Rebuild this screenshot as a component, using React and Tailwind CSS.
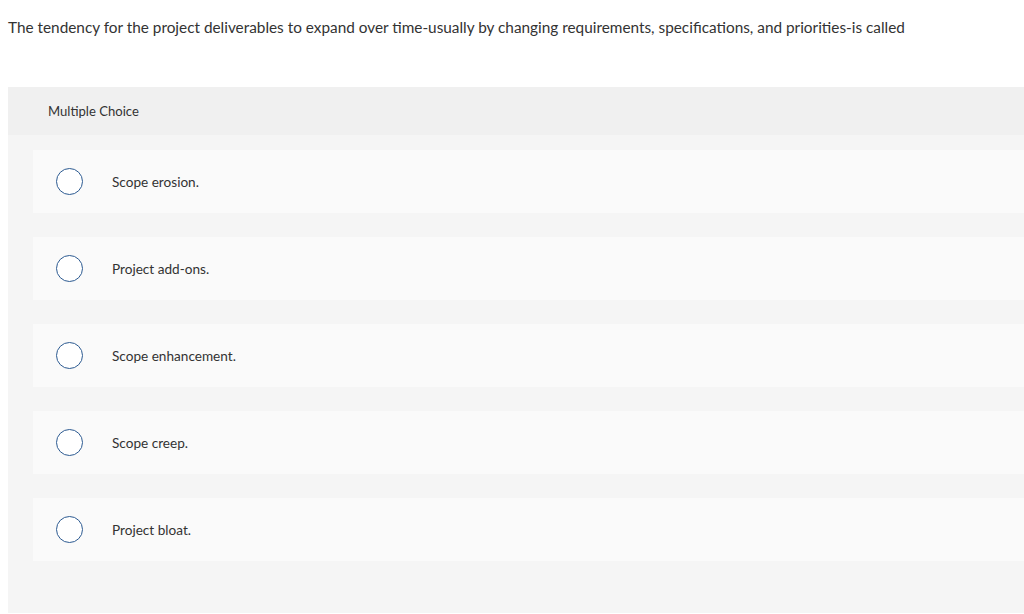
const options = [
  "Scope erosion.",
  "Project add-ons.",
  "Scope enhancement.",
  "Scope creep.",
  "Project bloat.",
];

export default function App() {
  return (
    <div className="min-h-[614px] bg-white text-[#333] font-['Lato','Open_Sans',sans-serif]">
      <p className="pl-[8px] pt-[17px] text-[15.35px] leading-[20px] h-[87px]">
        The tendency for the project deliverables to expand over time-usually by changing requirements, specifications, and priorities-is called
      </p>

      <div className="ml-[8px] bg-[#f5f5f5] pb-[52px]">
        <div className="h-[48px] bg-[#f0f0f0] flex items-center pl-[40px] pt-[2px] text-[13.1px]">
          Multiple Choice
        </div>

        <div className="flex flex-col gap-[24px] pt-[15px] pl-[25px]">
          {options.map((opt) => (
            <label key={opt} className="h-[63px] bg-[#fafafa] flex items-center pl-[23px] cursor-pointer">
              <span className="w-[27px] h-[27px] rounded-full border border-[#2c5a91] bg-white shrink-0" />
              <span className="ml-[29px] pt-[2px] text-[13.6px]">{opt}</span>
            </label>
          ))}
        </div>
      </div>
    </div>
  );
}
